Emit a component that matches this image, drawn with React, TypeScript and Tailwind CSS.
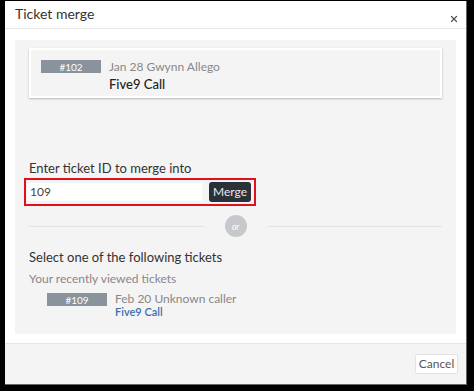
import { X } from 'lucide-react';

function Badge({ id }: { id: string })
{
  return (
    <span className="inline-flex items-center justify-center w-[60px] h-[13px] bg-[#8a939c] text-white text-[10px] leading-none">
      {id}
    </span>
  );
}

export default function App()
{
  return (
    <div className="w-[474px] h-[391px] bg-black pl-[5px] pt-px pr-[7px] pb-[6px] font-['Lato',sans-serif]">
      <div className="h-full bg-white flex flex-col border-r border-b border-[#666]">
        {/* Header */}
        <div className="h-[28px] flex items-center justify-between pl-[10px] pr-[7px] border-b border-[#e8e8e8]">
          <span className="text-[14px] text-[#333] leading-none -mt-[2px]">Ticket merge</span>
          <X className="w-[10px] h-[10px] text-[#555] mt-[8px]" strokeWidth={3} />
        </div>

        {/* Body */}
        <div className="flex-1 px-[10px] pt-[11px] pb-[9px]">
          <div className="h-full bg-[#f4f4f4] px-[14px] pt-[8px]">
            <div className="bg-white p-[2px] shadow-[0_1px_2px_rgba(0,0,0,0.25)]">
              <div className="bg-[#f4f4f4] h-[46px] pl-[10px] pt-[10px] flex gap-[8px]">
                <Badge id="#102" />
                <div className="flex flex-col">
                  <span className="text-[12px] leading-[13px] text-[#888]">Jan 28 Gwynn Allego</span>
                  <span className="text-[13px] leading-[16px] mt-[3px] text-[#222] font-medium">Five9 Call</span>
                </div>
              </div>
            </div>

            <div className="mt-[63px] text-[13px] leading-[14px] text-[#333]">Enter ticket ID to merge into</div>
            <div className="mt-[3px] -ml-[5px] w-[232px] h-[28px] border-2 border-[#e0101c] flex items-center pl-px pr-[3px] gap-[7px]">
              <div className="flex-1 h-[18px] bg-white flex items-center pl-[3px] text-[12px] text-[#444]">109</div>
              <button className="h-[20px] w-[42px] rounded-[3px] bg-[#2b3138] text-[#e5e7ea] text-[12px] leading-none">Merge</button>
            </div>

            <div className="mt-[9px] flex items-center gap-[20px]">
              <div className="flex-1 h-px bg-[#e4e4e4]" />
              <div className="w-[22px] h-[22px] rounded-full bg-[#c6c8cb] flex items-center justify-center text-white text-[9px] italic leading-none">or</div>
              <div className="flex-1 h-px bg-[#e4e4e4]" />
            </div>

            <div className="mt-[13px] text-[13px] leading-[14px] text-[#333]">Select one of the following tickets</div>
            <div className="mt-[8px] text-[12px] leading-[14px] text-[#888]">Your recently viewed tickets</div>
            <div className="mt-[7px] ml-[18px] flex gap-[8px]">
              <Badge id="#109" />
              <div className="flex flex-col -mt-px">
                <span className="text-[12px] leading-[14px] text-[#888]">Feb 20 Unknown caller</span>
                <span className="text-[11px] leading-[12px] text-[#3a6fb0] font-semibold">Five9 Call</span>
              </div>
            </div>
          </div>
        </div>

        {/* Footer */}
        <div className="h-[41px] bg-[#f4f4f4] border-t border-[#e6e6e6] flex items-center justify-end pr-[8px]">
          <button className="h-[20px] w-[43px] bg-white border border-[#e2e2e2] rounded-[2px] text-[12px] text-[#555] leading-none">Cancel</button>
        </div>
      </div>
    </div>
  );
}
